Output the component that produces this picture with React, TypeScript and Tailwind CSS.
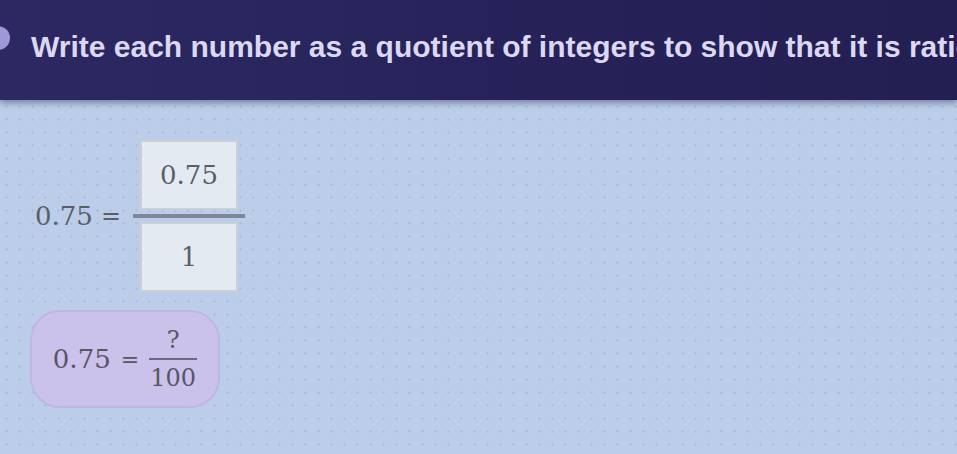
import React from 'react';

const serif = { fontFamily: '"DejaVu Serif", "Liberation Serif", serif' };

const Box: React.FC<{ value: string }> = ({ value }) => (
  <div className="w-[98px] h-[70px] bg-[#e3eaf2] border-2 border-[#c9d0d8] flex items-center justify-center text-[26px] text-[#5a5f66]">
    {value}
  </div>
);

export default function App() {
  return (
    <div className="w-[957px] h-[454px] overflow-hidden flex flex-col bg-[#bccde9]">
      {/* Header */}
      <div className="h-[100px] shrink-0 bg-gradient-to-r from-[#2c2862] via-[#27235a] to-[#231f52] flex items-start pt-[24px] relative shadow-[0_3px_6px_rgba(20,20,60,0.4)]">
        <div className="absolute -left-[14px] top-[26px] w-[24px] h-[24px] rounded-full bg-[#9e98d8]" />
        <h1
          className="pl-[31px] whitespace-nowrap text-[30px] font-bold text-[#dcd8f4] tracking-[0px]"
          style={{ fontFamily: '"Liberation Sans", Arial, sans-serif' }}
        >
          Write each number as a quotient of integers to show that it is rational.
        </h1>
      </div>

      {/* Body */}
      <div className="flex-1 bg-[radial-gradient(#a9bde0_1.2px,transparent_1.3px)] bg-[size:13px_13px] px-[30px] pt-[40px] flex flex-col gap-[18px]" style={serif}>
        <div className="flex items-center pl-[5px]">
          <span className="text-[26px] text-[#5a5f66]">0.75</span>
          <span className="text-[24px] text-[#5a5f66] ml-[8px] mr-[12px]">=</span>
          <div className="flex flex-col items-center">
            <Box value="0.75" />
            <div className="w-[112px] h-[4px] bg-[#7d8799] my-[4px]" />
            <Box value="1" />
          </div>
        </div>

        <div className="w-[190px] h-[98px] rounded-[30px] bg-[#cbc2ec] border-2 border-[#c0b6e6] flex items-center justify-center gap-[10px]">
          <span className="text-[26px] text-[#5a5566]">0.75</span>
          <span className="text-[22px] text-[#5a5566]">=</span>
          <div className="flex flex-col items-center text-[24px] text-[#5a5566] leading-none">
            <span className="pb-[6px]">?</span>
            <div className="w-[48px] h-[2px] bg-[#6e6880]" />
            <span className="pt-[6px]">100</span>
          </div>
        </div>
      </div>
    </div>
  );
}
